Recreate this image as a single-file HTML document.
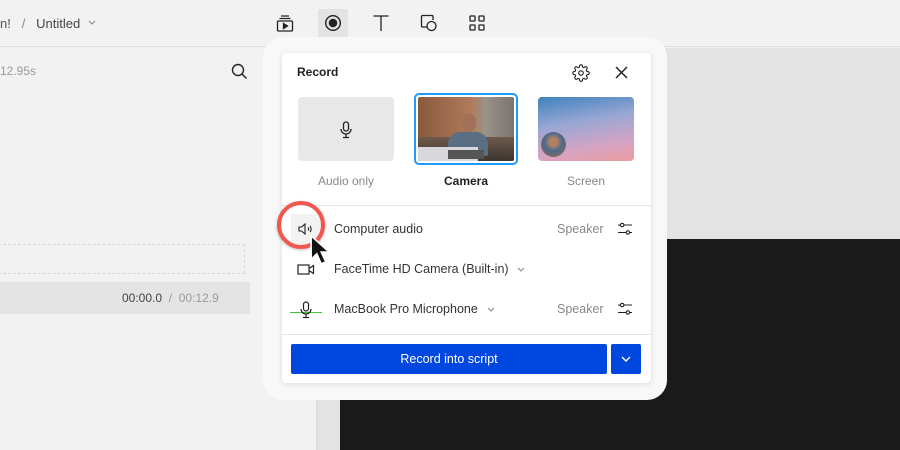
<!DOCTYPE html>
<html><head><style>
*{margin:0;padding:0;box-sizing:border-box}
body{width:900px;height:450px;overflow:hidden;background:#f2f2f2;font-family:"Liberation Sans",sans-serif;position:relative;color:#333}
.a{position:absolute}
</style></head><body>
<div class="a" style="left:0;top:0;width:900px;height:47px;border-bottom:1px solid #dcdcdc;background:#f2f2f2"></div>
<div class="a" style="left:0;top:16px;font-size:13px;color:#555">n!&nbsp;&nbsp;&nbsp;<span style="color:#888">/</span>&nbsp;&nbsp;&nbsp;<span style="color:#444">Untitled</span></div>
<svg class="a" style="left:87px;top:19px" width="10" height="7" viewBox="0 0 10 7" fill="none" stroke="#888" stroke-width="1.1"><path d="M2 2l3 3 3-3"/></svg>
<svg class="a" style="left:276px;top:14px" width="18" height="18" viewBox="0 0 18 18" fill="none" stroke="#222" stroke-width="1.3"><path d="M5 2h8M3.5 4.5h11"/><rect x="1.5" y="7" width="15" height="10" rx="1"/><path d="M7.5 9.5v5l4-2.5z" fill="#222"/></svg>
<div class="a" style="left:318px;top:9px;width:30px;height:29px;background:#e3e3e3;border-radius:2px"></div>
<svg class="a" style="left:324px;top:14px" width="18" height="18" viewBox="0 0 18 18"><circle cx="9" cy="9" r="7.3" fill="none" stroke="#222" stroke-width="1.4"/><circle cx="9" cy="9" r="4.3" fill="#222"/></svg>
<svg class="a" style="left:372px;top:14px" width="18" height="18" viewBox="0 0 18 18" fill="none" stroke="#222" stroke-width="1.3"><path d="M1.5 2h15M9 2v15"/></svg>
<svg class="a" style="left:420px;top:14px" width="18" height="18" viewBox="0 0 18 18" fill="none" stroke="#222" stroke-width="1.3"><path d="M8 13H2.5a1 1 0 0 1-1-1V2.5a1 1 0 0 1 1-1H12a1 1 0 0 1 1 1V6"/><circle cx="11.5" cy="12" r="4.5" fill="#f2f2f2"/></svg>
<svg class="a" style="left:469px;top:15px" width="16" height="16" viewBox="0 0 16 16" fill="none" stroke="#222" stroke-width="1.3"><rect x="1" y="1" width="5" height="5" rx=".5"/><rect x="10" y="1" width="5" height="5" rx=".5"/><rect x="1" y="10" width="5" height="5" rx=".5"/><rect x="10" y="10" width="5" height="5" rx=".5"/></svg>
<div class="a" style="left:0;top:64px;font-size:12px;color:#999">12.95s</div>
<svg class="a" style="left:231px;top:63px" width="17" height="17" viewBox="0 0 17 17" fill="none" stroke="#222" stroke-width="1.4"><circle cx="7" cy="7" r="5.5"/><path d="M11 11l4.5 4.5"/></svg>
<div class="a" style="left:-2px;top:244px;width:247px;height:30px;border:1px dashed #d6d6d6"></div>
<div class="a" style="left:0;top:282px;width:250px;height:32px;background:#e4e4e4"></div>
<div class="a" style="left:122px;top:291px;font-size:12px;color:#444">00:00.0 &nbsp;<span style="color:#999">/ &nbsp;00:12.9</span></div>
<div class="a" style="left:316px;top:48px;width:1px;height:402px;background:#dcdcdc"></div>
<div class="a" style="left:317px;top:48px;width:583px;height:402px;background:#e3e3e3"></div>
<div class="a" style="left:340px;top:239px;width:560px;height:211px;background:#1a1a1a"></div>
<div class="a" style="left:263px;top:37px;width:404px;height:363px;background:#f8f8f8;border-radius:20px"></div>
<div class="a" style="left:282px;top:53px;width:369px;height:330px;background:#fff;border-radius:4px;box-shadow:0 1px 6px rgba(0,0,0,.12)"></div>
<div class="a" style="left:297px;top:65px;font-size:12px;font-weight:bold;color:#222">Record</div>
<svg class="a" style="left:572px;top:64px" width="18" height="18" viewBox="0 0 24 24" fill="none" stroke="#222" stroke-width="1.5"><circle cx="12" cy="12" r="3"/><path d="M19.4 15a1.65 1.65 0 0 0 .33 1.82l.06.06a2 2 0 1 1-2.83 2.830l-.06-.06a1.65 1.65 0 0 0-1.82-.33 1.65 1.65 0 0 0-1 1.51V21a2 2 0 1 1-4 0v-.09A1.65 1.65 0 0 0 9 19.4a1.65 1.65 0 0 0-1.82.33l-.06.06a2 2 0 1 1-2.83-2.83l.06-.06A1.65 1.65 0 0 0 4.680 15a1.65 1.65 0 0 0-1.51-1H3a2 2 0 1 1 0-4h.09A1.65 1.65 0 0 0 4.6 9a1.65 1.65 0 0 0-.33-1.82l-.06-.06a2 2 0 1 1 2.83-2.83l.06.06A1.65 1.65 0 0 0 9 4.68 1.65 1.65 0 0 0 10 3.17V3a2 2 0 1 1 4 0v.09a1.65 1.65 0 0 0 1 1.51 1.65 1.65 0 0 0 1.82-.33l.06-.06a2 2 0 1 1 2.83 2.83l-.06.06A1.65 1.65 0 0 0 19.4 9a1.65 1.65 0 0 0 1.51 1H21a2 2 0 1 1 0 4h-.09a1.65 1.65 0 0 0-1.51 1z"/></svg>
<svg class="a" style="left:615px;top:66px" width="13" height="13" viewBox="0 0 13 13" stroke="#222" stroke-width="1.5"><path d="M1 1l11 11M12 1L1 12"/></svg>
<div class="a" style="left:298px;top:97px;width:96px;height:64px;background:#e8e8e8;border-radius:4px"></div>
<svg class="a" style="left:339px;top:121px" width="14" height="18" viewBox="0 0 14 18" fill="none" stroke="#222" stroke-width="1.3"><rect x="4.5" y="1" width="5" height="9" rx="2.5"/><path d="M2 8a5 5 0 0 0 10 0M7 13v3M4 16.5h6"/></svg>
<div class="a" style="left:414px;top:93px;width:104px;height:72px;border:2px solid #1e9bff;border-radius:5px"></div>
<div class="a" style="left:418px;top:97px;width:96px;height:64px;border-radius:2px;overflow:hidden;background:linear-gradient(90deg,#8a5a3e 0%,#b07a5a 55%,#9a9288 70%,#7b7470 100%)">
 <div class="a" style="left:0;top:40px;width:96px;height:24px;background:linear-gradient(#6e5a4a,#3d3430)"></div>
 <div class="a" style="left:30px;top:35px;width:40px;height:24px;background:#5a6e84;border-radius:12px 12px 2px 2px"></div>
 <div class="a" style="left:44px;top:16px;width:14px;height:19px;background:#a07058;border-radius:50%"></div>
 <div class="a" style="left:0;top:50px;width:60px;height:14px;background:#d8d8dc"></div>
 <div class="a" style="left:30px;top:53px;width:36px;height:9px;background:#555"></div>
</div>
<div class="a" style="left:538px;top:97px;width:96px;height:64px;border-radius:4px;background:linear-gradient(170deg,#3f82bd 0%,#9aa7d4 40%,#d7a3c3 75%,#eb9c9c 100%);overflow:hidden"><div class="a" style="left:3px;top:35px;width:25px;height:25px;border-radius:50%;background:radial-gradient(circle at 50% 40%,#b08060 20%,#4e6a8c 45%,#7a6a5c 80%)"></div></div>
<div class="a" style="left:298px;top:174px;width:96px;text-align:center;font-size:12px;color:#888">Audio only</div>
<div class="a" style="left:414px;top:174px;width:104px;text-align:center;font-size:12px;font-weight:bold;color:#222">Camera</div>
<div class="a" style="left:538px;top:174px;width:96px;text-align:center;font-size:12px;color:#888">Screen</div>
<div class="a" style="left:282px;top:205px;width:369px;height:1px;background:#e6e6e6"></div>
<div class="a" style="left:291px;top:214px;width:30px;height:30px;background:#f2f2f2;border-radius:2px"></div>
<svg class="a" style="left:298px;top:223px" width="16" height="12" viewBox="0 0 16 12" fill="none" stroke="#222" stroke-width="1.1"><path d="M1 4h2.5l3.5-3v10l-3.5-3H1z"/><path d="M10 4.5a2 2 0 0 1 0 3M12 3a4.5 4.5 0 0 1 0 6"/></svg>
<div class="a" style="left:277px;top:201px;width:48px;height:48px;border:4px solid #f0584f;border-radius:50%;box-shadow:0 1px 3px rgba(0,0,0,.25)"></div>
<svg class="a" style="left:309px;top:234px" width="28" height="34" viewBox="0 0 24 30"><path d="M1.5 1.5v21l5-5 4 9 4-2-4-8.5h7z" fill="#111" stroke="#fff" stroke-width="1.5"/></svg>
<div class="a" style="left:334px;top:222px;font-size:12.5px;color:#333">Computer audio</div>
<div class="a" style="left:557px;top:222px;font-size:12.5px;color:#888">Speaker</div>
<svg class="a" style="left:617px;top:222px" width="16" height="14" viewBox="0 0 16 14" fill="none" stroke="#222" stroke-width="1.1"><path d="M1 3h2.5M7 3h8M1 10.5h8M12.5 10.5H15"/><circle cx="5.2" cy="3" r="1.7"/><circle cx="10.8" cy="10.5" r="1.7"/></svg>
<svg class="a" style="left:297px;top:263px" width="18" height="13" viewBox="0 0 18 13" fill="none" stroke="#222" stroke-width="1.2"><rect x="1" y="2" width="11" height="9"/><path d="M12 5.5l4.5-3v8l-4.5-3"/></svg>
<div class="a" style="left:334px;top:262px;font-size:12.5px;color:#333">FaceTime HD Camera (Built-in)</div>
<svg class="a" style="left:516px;top:266px" width="10" height="7" viewBox="0 0 10 7" fill="none" stroke="#888" stroke-width="1.1"><path d="M2 2l3 3 3-3"/></svg>
<div class="a" style="left:290px;top:312px;width:32px;height:1px;background:#3fc43a"></div>
<svg class="a" style="left:299px;top:301px" width="14" height="18" viewBox="0 0 14 18" fill="none" stroke="#222" stroke-width="1.2"><rect x="4.5" y="1" width="5" height="9" rx="2.5"/><path d="M2 8a5 5 0 0 0 10 0M7 13v3M4 16.5h6"/></svg>
<div class="a" style="left:334px;top:302px;font-size:12.5px;color:#333">MacBook Pro Microphone</div>
<svg class="a" style="left:486px;top:306px" width="10" height="7" viewBox="0 0 10 7" fill="none" stroke="#888" stroke-width="1.1"><path d="M2 2l3 3 3-3"/></svg>
<div class="a" style="left:557px;top:302px;font-size:12.5px;color:#888">Speaker</div>
<svg class="a" style="left:617px;top:302px" width="16" height="14" viewBox="0 0 16 14" fill="none" stroke="#222" stroke-width="1.1"><path d="M1 3h2.5M7 3h8M1 10.5h8M12.5 10.5H15"/><circle cx="5.2" cy="3" r="1.7"/><circle cx="10.8" cy="10.5" r="1.7"/></svg>
<div class="a" style="left:282px;top:334px;width:369px;height:1px;background:#e6e6e6"></div>
<div class="a" style="left:291px;top:344px;width:316px;height:30px;background:#0047e0;border-radius:2px;color:#fff;font-size:12.5px;text-align:center;line-height:30px">Record into script</div>
<div class="a" style="left:611px;top:344px;width:30px;height:30px;background:#0047e0;border-radius:2px"></div>
<svg class="a" style="left:620px;top:355px" width="12" height="8" viewBox="0 0 12 8" fill="none" stroke="#fff" stroke-width="1.4"><path d="M2 2l4 4 4-4"/></svg>
</body></html>
